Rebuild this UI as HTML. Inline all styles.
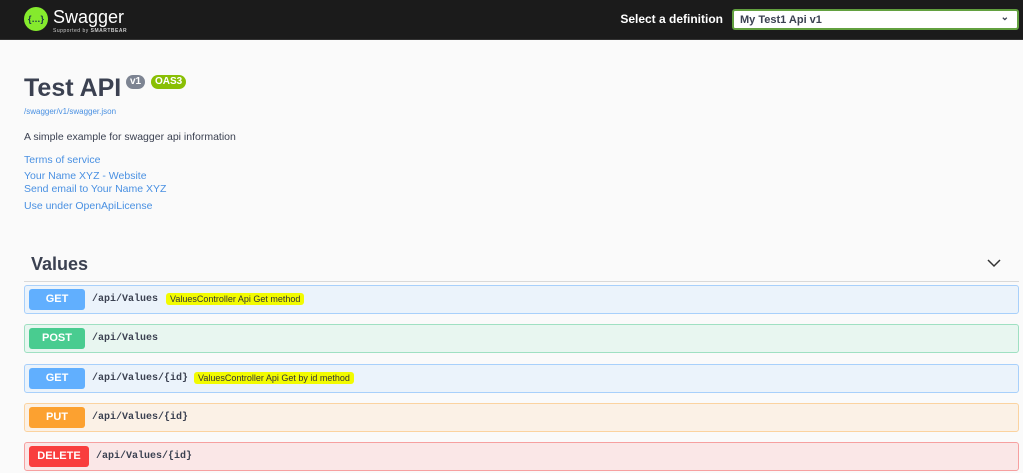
<!DOCTYPE html>
<html><head><style>
*{box-sizing:border-box;margin:0;padding:0}
body{width:1023px;height:473px;overflow:hidden;background:#fafafa;font-family:"Liberation Sans",sans-serif;color:#3b4151;position:relative}
.hdr{position:absolute;left:0;top:0;width:1023px;height:40px;background:#1b1b1b;border-bottom:1px solid #333}
.logo{position:absolute;left:24px;top:7px;width:24px;height:24px;border-radius:50%;background:#85ea2d;color:#173647;font-size:9px;font-weight:bold;text-align:center;line-height:24px}
.sw{position:absolute;left:53px;top:7px;color:#fff;font-size:18px}
.sb{position:absolute;left:53px;top:28px;color:#ccc;font-size:5px;letter-spacing:.5px}
.sel-l{position:absolute;right:300px;top:12px;color:#fff;font-weight:bold;font-size:12px}
.sel{position:absolute;left:732px;top:9px;width:287px;height:21px;border:2px solid #62a03f;background:#fff;border-radius:3px;font-size:11px;font-weight:bold;padding:3px 0 0 6px;color:#3b4151}
.sel span{position:absolute;right:8px;top:1px;font-size:10px}
a{color:#4990e2;text-decoration:none}
.t{position:absolute;left:24px;top:74px;font-size:25px;font-weight:bold}
.bd{position:absolute;top:75px;height:14px;border-radius:7px;color:#fff;font-size:10px;font-weight:bold;line-height:14px;padding:0 4px}
.r{position:absolute;left:24px;font-size:10.5px}
.vals{position:absolute;left:31px;top:254px;font-size:18px;font-weight:bold}
.div{position:absolute;left:24px;top:281px;width:995px;height:1px;background:#d9d9d9}
.op{position:absolute;left:24px;width:995px;height:29px;border:1px solid;border-radius:3px}
.m{position:absolute;left:4px;top:3px;width:56px;height:21px;border-radius:3px;color:#fff;font-size:11px;font-weight:bold;text-align:center;line-height:21px}
.p{position:absolute;left:67px;top:8px;font-family:"Liberation Mono",monospace;font-weight:bold;font-size:10px}
.hl{position:absolute;top:7px;background:#f2fb00;font-size:9px;padding:1px 4px;border-radius:3px;color:#333}
</style></head><body>
<div class="hdr">
<div class="logo">{…}</div><div class="sw">Swagger</div><div class="sb">Supported by <b>SMARTBEAR</b></div>
<div class="sel-l">Select a definition</div>
<div class="sel">My Test1 Api v1<span>⌄</span></div>
</div>
<div class="t">Test API</div>
<div class="bd" style="left:126px;background:#7d8492">v1</div>
<div class="bd" style="left:151px;background:#89bf04">OAS3</div>
<div class="r" style="top:107px;font-size:8px"><a>/swagger/v1/swagger.json</a></div>
<div class="r" style="top:131px">A simple example for swagger api information</div>
<div class="r" style="top:154px"><a>Terms of service</a></div>
<div class="r" style="top:170px"><a>Your Name XYZ - Website</a></div>
<div class="r" style="top:183px"><a>Send email to Your Name XYZ</a></div>
<div class="r" style="top:200px"><a>Use under OpenApiLicense</a></div>
<div class="vals">Values</div>
<svg style="position:absolute;left:987px;top:258px" width="14" height="10"><path d="M1 2 L7 8 L13 2" stroke="#333" stroke-width="1.5" fill="none"/></svg>
<div class="div"></div>
<div class="op" style="top:285px;background:#ebf3fb;border-color:#a8d0fb"><div class="m" style="background:#61affe">GET</div><div class="p">/api/Values</div><div class="hl" style="left:141px">ValuesController Api Get method</div></div>
<div class="op" style="top:324px;background:#e8f6f0;border-color:#9fe0c2"><div class="m" style="background:#49cc90">POST</div><div class="p">/api/Values</div></div>
<div class="op" style="top:364px;background:#ebf3fb;border-color:#a8d0fb"><div class="m" style="background:#61affe">GET</div><div class="p">/api/Values/{id}</div><div class="hl" style="left:169px">ValuesController Api Get by id method</div></div>
<div class="op" style="top:403px;background:#fbf1e6;border-color:#fbd3a0"><div class="m" style="background:#fca130">PUT</div><div class="p">/api/Values/{id}</div></div>
<div class="op" style="top:442px;background:#fae7e7;border-color:#f6a0a0"><div class="m" style="background:#f93e3e;width:60px">DELETE</div><div class="p" style="left:71px">/api/Values/{id}</div></div>
</body></html>
